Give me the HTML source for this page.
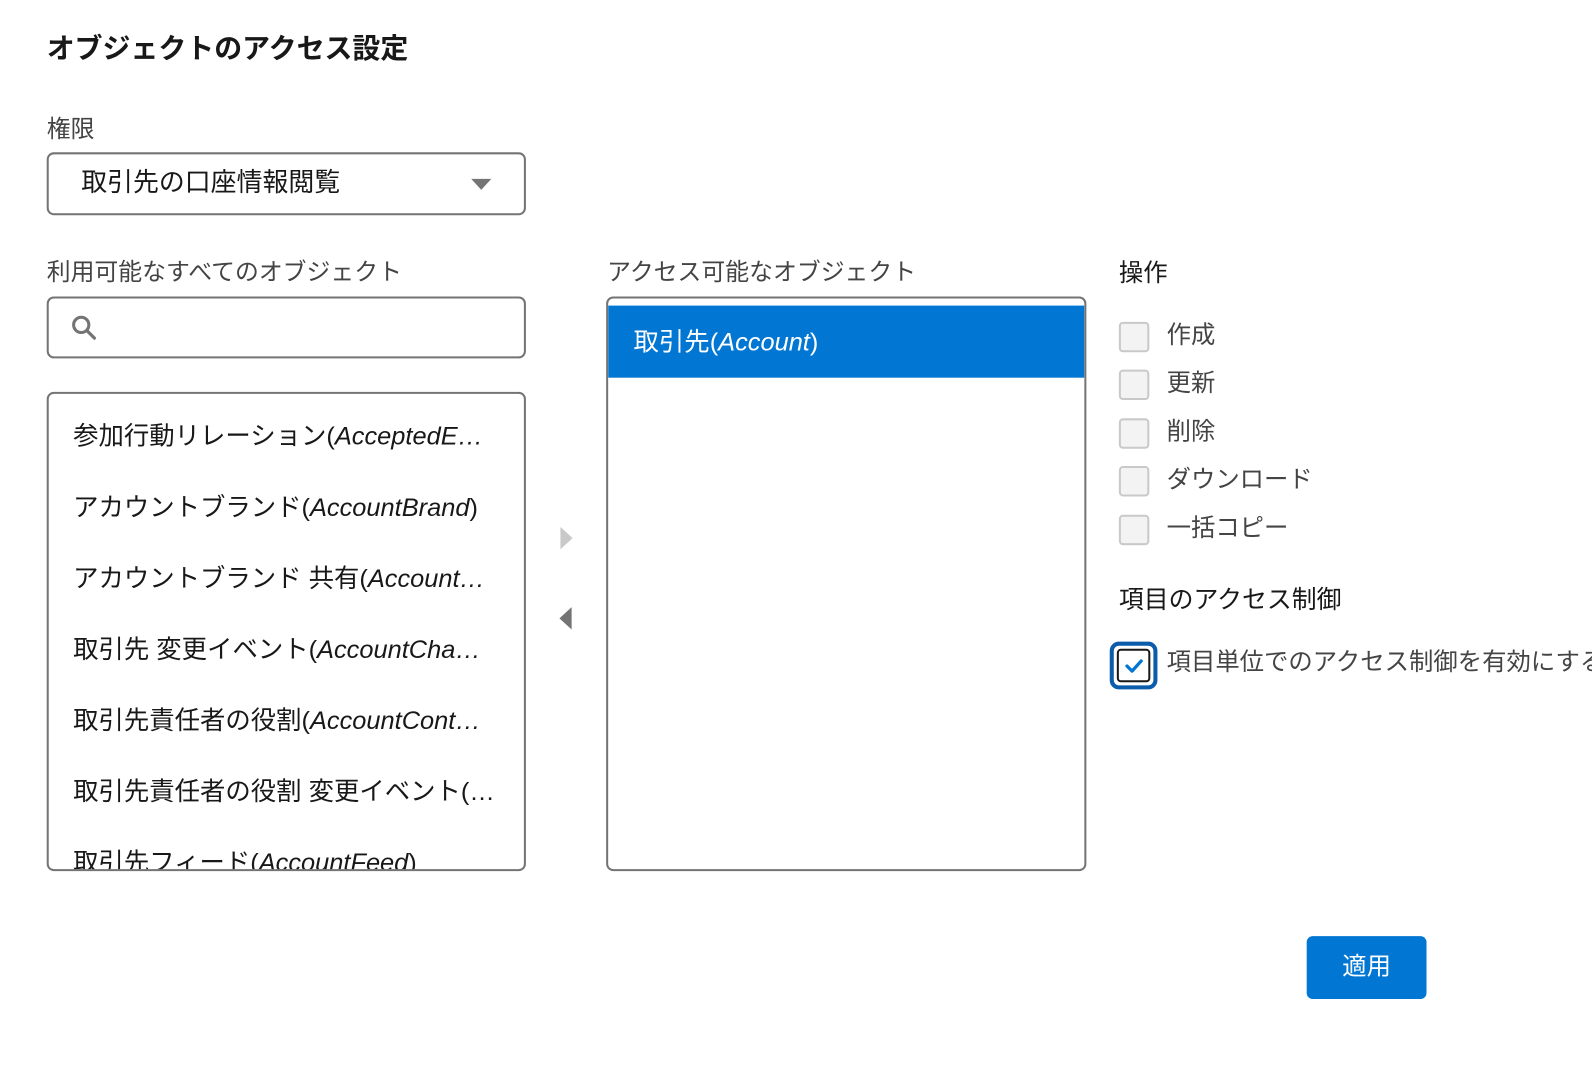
<!DOCTYPE html>
<html><head><meta charset="utf-8"><style>
*{margin:0;padding:0;box-sizing:border-box}
body{width:1592px;height:1066px;background:#fff;font-family:"Liberation Sans","Noto Sans CJK JP",sans-serif;color:#181818;position:relative;overflow:hidden}
#w{position:absolute;left:0;top:0;width:1700px;height:1050px;transform:scale(1.0153);transform-origin:0 0}
.a{position:absolute;white-space:nowrap}
.lbl{font-size:23.5px;color:#444;line-height:1}
.box{position:absolute;border:2px solid #747474;border-radius:7px;background:#fff}
.item{position:absolute;left:24px;font-size:25px;line-height:1;color:#181818;white-space:nowrap}
i{font-style:italic}
.cb{position:absolute;left:1102px;width:30px;height:30px;border:2px solid #c9c9c9;border-radius:4px;background:#f3f3f3}
.cl{position:absolute;left:1149px;font-size:24px;color:#444;line-height:1;white-space:nowrap}
</style></head><body><div id="w">
<div class="a" style="left:46px;top:34px;font-size:27.5px;font-weight:bold;line-height:1">オブジェクトのアクセス設定</div>
<div class="a lbl" style="left:46px;top:116px">権限</div>
<div class="box" style="left:46px;top:150px;width:472px;height:62px">
 <div class="a" style="left:32px;top:16px;font-size:25.5px;line-height:1">取引先の口座情報閲覧</div>
 <svg class="a" style="left:416px;top:24px" width="20" height="12"><path d="M0 0H20L10 11Z" fill="#747474"/></svg>
</div>
<div class="a lbl" style="left:46px;top:257px">利用可能なすべてのオブジェクト</div>
<div class="box" style="left:46px;top:292px;width:472px;height:61px">
 <svg class="a" style="left:22px;top:16px" width="26" height="26" viewBox="0 0 26 26"><circle cx="10" cy="10" r="7.5" stroke="#747474" stroke-width="3" fill="none"/><path d="M15.5 15.5L23 23" stroke="#747474" stroke-width="3.2" stroke-linecap="round"/></svg>
</div>
<div class="box" style="left:46px;top:386px;width:472px;height:472px;overflow:hidden">
 <div class="item" style="top:30px">参加行動リレーション(<i>AcceptedE…</i></div>
 <div class="item" style="top:100px">アカウントブランド(<i>AccountBrand</i>)</div>
 <div class="item" style="top:170px">アカウントブランド 共有(<i>Account…</i></div>
 <div class="item" style="top:240px">取引先 変更イベント(<i>AccountCha…</i></div>
 <div class="item" style="top:310px">取引先責任者の役割(<i>AccountCont…</i></div>
 <div class="item" style="top:380px">取引先責任者の役割 変更イベント(…</div>
 <div class="item" style="top:450px">取引先フィード(<i>AccountFeed</i>)</div>
</div>
<svg class="a" style="left:551px;top:519px" width="14" height="22"><path d="M1 0L13 11L1 22Z" fill="#c9c9c9"/></svg>
<svg class="a" style="left:550px;top:598px" width="14" height="22"><path d="M13 0L1 11L13 22Z" fill="#747474"/></svg>
<div class="a lbl" style="left:598px;top:257px">アクセス可能なオブジェクト</div>
<div class="box" style="left:597px;top:292px;width:473px;height:566px;overflow:hidden">
 <div class="a" style="left:0;top:7px;width:469px;height:71px;background:#0176d3"></div>
 <div class="a" style="left:25px;top:31px;font-size:25px;color:#fff;line-height:1">取引先(<i>Account</i>)</div>
</div>
<div class="a" style="left:1102px;top:258px;font-size:24px;line-height:1;color:#181818">操作</div>
<div class="cb" style="top:317px"></div><div class="cl" style="top:319px">作成</div>
<div class="cb" style="top:364px"></div><div class="cl" style="top:366px">更新</div>
<div class="cb" style="top:412px"></div><div class="cl" style="top:414px">削除</div>
<div class="cb" style="top:459px"></div><div class="cl" style="top:461px">ダウンロード</div>
<div class="cb" style="top:507px"></div><div class="cl" style="top:509px">一括コピー</div>
<div class="a" style="left:1102px;top:580px;font-size:24.5px;line-height:1;color:#181818">項目のアクセス制御</div>
<div class="a" style="left:1093px;top:632px;width:47px;height:47px;border:4px solid #0b5cab;border-radius:9px"></div>
<div class="a" style="left:1100px;top:639px;width:33px;height:33px;border:2px solid #181818;border-radius:4px;background:#fff">
 <svg class="a" style="left:6px;top:8px" width="18" height="14"><path d="M2 7L7 12L16 2" stroke="#0176d3" stroke-width="3.2" fill="none" stroke-linecap="round" stroke-linejoin="round"/></svg>
</div>
<div class="cl" style="top:641px">項目単位でのアクセス制御を有効にする</div>
<div class="a" style="left:1287px;top:922px;width:118px;height:62px;background:#0176d3;border-radius:6px;color:#fff;font-size:24px;line-height:62px;text-align:center">適用</div>
</div></body></html>
